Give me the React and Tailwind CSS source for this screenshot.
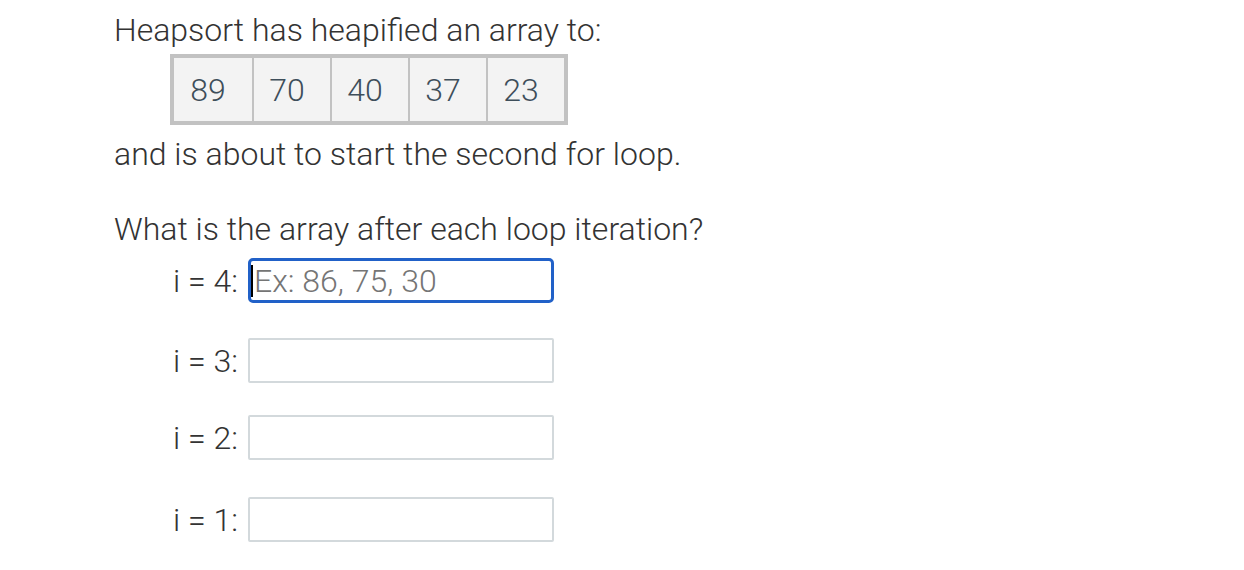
import React from "react";

export default function App() {
  const arr = [89, 70, 40, 37, 23];
  const rows = [
    { i: 4, focused: true, mt: "mt-[10px]" },
    { i: 3, mt: "mt-[35px]" },
    { i: 2, mt: "mt-[32px]" },
    { i: 1, mt: "mt-[37px]" },
  ];
  return (
    <div className="w-[1244px] h-[570px] bg-white text-[#333333] font-light" style={{ fontFamily: "Roboto, 'Liberation Sans', sans-serif" }}>
      <div className="pl-[114px] pt-[11px] text-[32px] leading-[38px]">
        <div>Heapsort has heapified an array to:</div>
        <div className="pl-[56px] mt-[5px]">
          <div className="inline-flex border-[4px] border-[#c2c2c2] bg-[#f3f3f3] text-[#3e4e5a]">
            {arr.map((v, k) => (
              <div key={k} className={`w-[78px] h-[63px] flex items-center justify-center pr-[10px] ${k > 0 ? "border-l-[2px] border-[#c2c2c2]" : ""}`}>
                {v}
              </div>
            ))}
          </div>
        </div>
        <div className="mt-[10px]">and is about to start the second for loop.</div>
        <div className="mt-[37px]">What is the array after each loop iteration?</div>
        <div className="flex flex-col">
          {rows.map((r) => (
            <div key={r.i} className={`flex items-center ${r.mt}`}>
              <div className="w-[134px] text-right pr-[10px]">i = {r.i}:</div>
              <div
                className={`w-[306px] h-[45px] flex items-center ${r.focused ? "border-[3px] border-[#2161c8] rounded-[5px]" : "border-[2px] border-[#d3d9dc] rounded-[2px]"}`}
              >
                {r.focused && (
                  <span className="text-[#757575] pl-[1px] border-l-[2px] border-black leading-[32px]">Ex: 86, 75, 30</span>
                )}
              </div>
            </div>
          ))}
        </div>
      </div>
    </div>
  );
}
